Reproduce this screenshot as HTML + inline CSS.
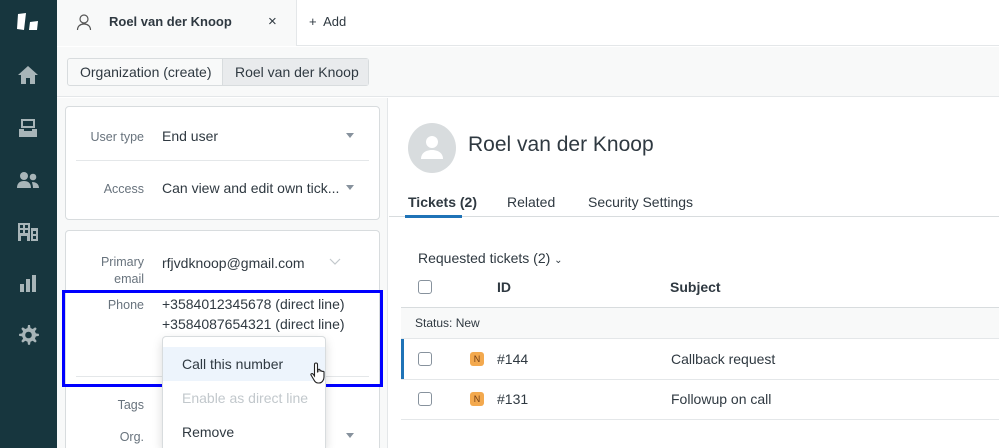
<!DOCTYPE html>
<html style="width:999px;height:448px;overflow:hidden"><head><style>
*{box-sizing:border-box;margin:0;padding:0}
body{width:999px;height:448px;overflow:hidden;font-family:"Liberation Sans",sans-serif;font-size:14px;color:#2f3941;background:#fff;position:relative}
.abs{position:absolute}
.side{left:0;top:0;width:57px;height:448px;background:#17363e}
.ic{position:absolute;left:16px;width:24px;height:24px}
.lbl{position:absolute;font-size:12.5px;color:#68737d;text-align:right;width:90px;left:54px}
.val{position:absolute;left:162px;font-size:14px;color:#2f3941}
.cb{position:absolute;width:14px;height:14px;border:1px solid #87929d;border-radius:3px;background:#fff}
.nb{position:absolute;width:14px;height:14px;background:#f3a94e;border-radius:3px;font-size:9px;color:#703b15;text-align:center;line-height:14px}
</style></head><body>
<div class="abs side">
 <svg class="ic" style="top:10px" viewBox="0 0 24 24"><path d="M2 4 L10 3 L8 20 L1 19Z M14 12 L22 11 L21 20 L13 20Z" fill="#fff"/></svg>
 <svg class="ic" style="top:63px" viewBox="0 0 24 24"><path d="M12 3 L22 12 L19 12 L19 21 L14 21 L14 15 L10 15 L10 21 L5 21 L5 12 L2 12Z" fill="#a8b5b8"/></svg>
 <svg class="ic" style="top:116px" viewBox="0 0 24 24"><path d="M5 3h14v9H5z M7 5v5h10V5z M3 13h5v2h8v-2h5v8H3z" fill="#a8b5b8"/></svg>
 <svg class="ic" style="top:168px" viewBox="0 0 24 24"><circle cx="8" cy="8" r="4" fill="#a8b5b8"/><circle cx="17" cy="9" r="3.3" fill="#a8b5b8"/><path d="M1 20c0-5 3-7 7-7s7 2 7 7z M16 14c4 0 7 2 7 6h-6c0-3-1-5-1-6z" fill="#a8b5b8"/></svg>
 <svg class="ic" style="top:220px" viewBox="0 0 24 24"><path d="M2 3h12v18H2z M15 8h7v13h-7z" fill="#a8b5b8"/><path d="M4 5h3v3H4zM9 5h3v3H9zM4 10h3v3H4zM9 10h3v3H9zM5 16h6v5H5zM17 11h3v3h-3zM17 16h3v3h-3z" fill="#17363e"/></svg>
 <svg class="ic" style="top:272px" viewBox="0 0 24 24"><path d="M4 12h4v8H4zM10 7h4v13h-4zM16 3h4v17h-4z" fill="#a8b5b8"/></svg>
 <svg class="ic" style="top:323px" viewBox="0 0 24 24"><path d="M12 2l2 0 .5 3 2.2 1 2.5-1.8 1.5 1.5-1.8 2.5 1 2.2 3 .5v2l-3 .5-1 2.2 1.8 2.5-1.5 1.5-2.5-1.8-2.2 1-.5 3h-2l-.5-3-2.2-1-2.5 1.8-1.5-1.5 1.8-2.5-1-2.2-3-.5v-2l3-.5 1-2.2-1.8-2.5 1.5-1.5 2.5 1.8 2.2-1 .5-3z" fill="#a8b5b8"/><circle cx="12.5" cy="12" r="3.3" fill="#17363e"/></svg>
</div>
<div class="abs" style="left:57px;top:0;width:942px;height:46px;background:#f8f9f9;border-bottom:1px solid #e4e7e9"></div>
<div class="abs" style="left:57px;top:0;width:240px;height:46px;background:#f8f9f9;border-right:1px solid #e4e7e9"></div>
<div class="abs" style="left:297px;top:0;width:702px;height:46px;background:#fff;border-bottom:1px solid #e4e7e9"></div>
<svg class="abs" style="left:76px;top:13px" width="16" height="18" viewBox="0 0 16 18"><circle cx="8" cy="6" r="4" fill="none" stroke="#555" stroke-width="1.2"/><path d="M1.5 17c0-4 3-6 6.5-6s6.5 2 6.5 6" fill="none" stroke="#555" stroke-width="1.2"/></svg>
<div class="abs" style="left:109px;top:14px;font-size:13px;font-weight:bold;color:#2f3941">Roel van der Knoop</div>
<div class="abs" style="left:268px;top:13px;font-size:15px">×</div>
<div class="abs" style="left:309px;top:14px;font-size:13px">+&nbsp; Add</div>
<div class="abs" style="left:57px;top:47px;width:942px;height:50px;background:#f8f9f9;border-bottom:1px solid #e4e7e9"></div>
<div class="abs" style="left:67px;top:58px;width:302px;height:28px;border:1px solid #d8dcde;border-radius:3px;background:#f8f9f9"></div>
<div class="abs" style="left:222px;top:59px;width:146px;height:26px;background:#e9ebed;border-left:1px solid #d8dcde"></div>
<div class="abs" style="left:80px;top:64px;font-size:14px">Organization (create)</div>
<div class="abs" style="left:235px;top:64px;font-size:14px">Roel van der Knoop</div>
<div class="abs" style="left:57px;top:98px;width:331px;height:350px;background:#f8f9f9;border-right:1px solid #e4e7e9"></div>
<div class="abs" style="left:65px;top:106px;width:315px;height:114px;background:#fff;border:1px solid #d8dcde;border-radius:4px"></div>
<div class="lbl" style="top:130px">User type</div>
<div class="val" style="top:128px">End user</div>
<div class="abs" style="left:346px;top:133px;border:4px solid transparent;border-top:5px solid #87929d"></div>
<div class="abs" style="left:76px;top:160px;width:293px;height:1px;background:#e4e7e9"></div>
<div class="lbl" style="top:182px">Access</div>
<div class="val" style="top:180px">Can view and edit own tick...</div>
<div class="abs" style="left:346px;top:185px;border:4px solid transparent;border-top:5px solid #87929d"></div>
<div class="abs" style="left:65px;top:230px;width:315px;height:218px;background:#fff;border:1px solid #d8dcde;border-bottom:none;border-radius:4px 4px 0 0"></div>
<div class="lbl" style="top:254px;line-height:17px">Primary<br>email</div>
<div class="val" style="top:255px">rfjvdknoop@gmail.com</div>
<svg class="abs" style="left:329px;top:258px" width="12" height="8"><path d="M1 1l5 5 5-5" fill="none" stroke="#c2c8cc" stroke-width="1.2"/></svg>
<div class="lbl" style="top:298px">Phone</div>
<div class="val" style="top:296px">+3584012345678 (direct line)</div>
<div class="val" style="top:316px">+3584087654321 (direct line)</div>
<div class="abs" style="left:76px;top:376px;width:293px;height:1px;background:#e4e7e9"></div>
<div class="lbl" style="top:398px">Tags</div>
<div class="lbl" style="top:430px">Org.</div>
<div class="abs" style="left:346px;top:433px;border:4px solid transparent;border-top:5px solid #87929d"></div>
<div class="abs" style="left:62px;top:290px;width:321px;height:97px;border:3px solid #0000ff"></div>
<div class="abs" style="left:162px;top:336px;width:164px;height:112px;background:#fff;border:1px solid #d8dcde;border-bottom:none;border-radius:4px 4px 0 0;box-shadow:0 4px 10px rgba(0,0,0,.15)"></div>
<div class="abs" style="left:163px;top:347px;width:162px;height:34px;background:#edf4fc"></div>
<div class="abs" style="left:182px;top:356px;font-size:14px">Call this number</div>
<div class="abs" style="left:182px;top:390px;font-size:14px;color:#c2c8cc">Enable as direct line</div>
<div class="abs" style="left:182px;top:424px;font-size:14px">Remove</div>
<svg class="abs" style="left:310px;top:361px" width="20" height="24" viewBox="0 0 20 24"><path d="M6 2c1 0 1.5.6 1.5 1.5V11l.5-.2V9c0-1 2-1 2 0v1.5c0-1 2-1 2 0V11c0-1 2-1 2 0v5c0 3-2 6-5 6H8c-2 0-3-1-4-3l-3-5c-.5-1 1-2 2-1l1.5 2V3.5C4.5 2.6 5 2 6 2z" fill="#fff" stroke="#222" stroke-width="1.1"/></svg>
<div class="abs" style="left:408px;top:123px;width:48px;height:50px;border-radius:50%;background:#d8dcde"></div>
<svg class="abs" style="left:408px;top:123px" width="48" height="50"><circle cx="24" cy="19" r="6" fill="#fff"/><path d="M13 36c0-6 5-9 11-9s11 3 11 9z" fill="#fff"/></svg>
<div class="abs" style="left:468px;top:133px;font-size:21px;color:#2f3941">Roel van der Knoop</div>
<div class="abs" style="left:408px;top:194px;font-size:14px;font-weight:bold">Tickets (2)</div>
<div class="abs" style="left:507px;top:194px;font-size:14px">Related</div>
<div class="abs" style="left:588px;top:194px;font-size:14px">Security Settings</div>
<div class="abs" style="left:389px;top:216px;width:610px;height:1px;background:#d8dcde"></div>
<div class="abs" style="left:405px;top:215px;width:57px;height:3px;background:#1f73b7"></div>
<div class="abs" style="left:418px;top:250px;font-size:14px">Requested tickets (2) <span style="font-size:10px">⌄</span></div>
<div class="cb" style="left:418px;top:280px"></div>
<div class="abs" style="left:497px;top:279px;font-size:14px;font-weight:bold">ID</div>
<div class="abs" style="left:670px;top:279px;font-size:14px;font-weight:bold">Subject</div>
<div class="abs" style="left:401px;top:307px;width:598px;height:32px;background:#f8f9f9;border-top:1px solid #d8dcde;border-bottom:1px solid #e4e7e9"></div>
<div class="abs" style="left:415px;top:316px;font-size:12px">Status: New</div>
<div class="abs" style="left:401px;top:339px;width:3px;height:40px;background:#1f73b7"></div>
<div class="cb" style="left:418px;top:352px"></div>
<div class="nb" style="left:470px;top:352px">N</div>
<div class="abs" style="left:497px;top:351px">#144</div>
<div class="abs" style="left:671px;top:351px">Callback request</div>
<div class="abs" style="left:401px;top:379px;width:598px;height:1px;background:#e4e7e9"></div>
<div class="cb" style="left:418px;top:392px"></div>
<div class="nb" style="left:470px;top:392px">N</div>
<div class="abs" style="left:497px;top:391px">#131</div>
<div class="abs" style="left:671px;top:391px">Followup on call</div>
<div class="abs" style="left:401px;top:419px;width:598px;height:1px;background:#e4e7e9"></div>
</body></html>
